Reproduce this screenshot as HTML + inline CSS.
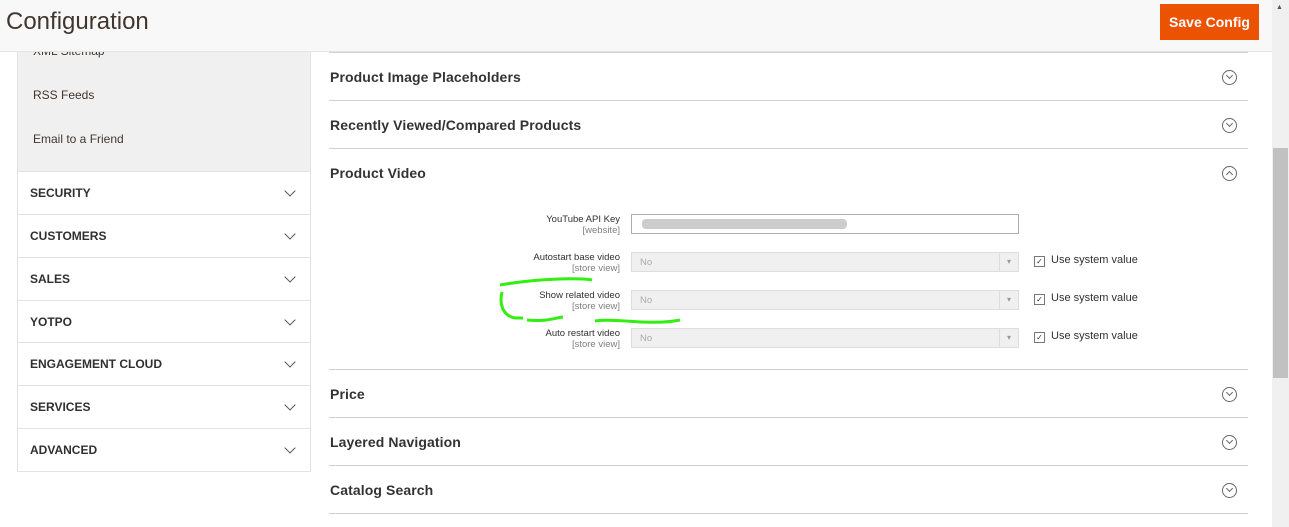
<!DOCTYPE html>
<html><head><style>
*{box-sizing:border-box;margin:0;padding:0}
body{width:1289px;height:527px;overflow:hidden;background:#fff;font-family:"Liberation Sans",sans-serif;position:relative;color:#303030}
.hdr{position:absolute;left:0;top:0;width:1272px;height:52px;background:#f8f8f8;border-bottom:1px solid #e3e3e3;z-index:2}
.hdr h1{position:absolute;left:6px;top:8px;font-size:24px;font-weight:normal;color:#41362f}
.btn{position:absolute;left:1160px;top:4px;width:99px;height:36px;background:#eb5202;color:#fff;font-weight:bold;font-size:14px;line-height:36px;text-align:center}
.sb{position:absolute;left:1272px;top:0;width:17px;height:527px;background:#f0f0f0}
.thumb{position:absolute;left:1273px;top:148px;width:15px;height:230px;background:#c1c1c1}
.side{position:absolute;left:17px;top:0;width:294px;height:472px;border:1px solid #e3e3e3;border-top:none}
.gray{position:absolute;left:0;top:0;width:292px;height:171px;background:#f0f0f0}
.gray div{position:absolute;left:15px;font-size:12px;color:#41362f}
.it{position:absolute;left:0;width:292px;height:43px;border-top:1px solid #e3e3e3;font-size:12px;font-weight:bold;padding-left:12px;line-height:42px;color:#303030}
.it:after{content:"";position:absolute;right:16px;top:15px;width:7px;height:7px;border-right:1.5px solid #555;border-bottom:1.5px solid #555;transform:rotate(45deg)}
.sec{position:absolute;left:329px;width:919px;border-top:1px solid #d1d1d1;font-size:14px;font-weight:bold;color:#333;letter-spacing:.1px}
.sec span{position:absolute;left:1px;top:16px}
.ci{position:absolute;left:893px;top:17px;width:15px;height:15px;border:1px solid #666;border-radius:50%}
.ci:after{content:"";position:absolute;left:4px;top:2px;width:4px;height:4px;border-right:1px solid #666;border-bottom:1px solid #666;transform:rotate(45deg)}
.ci.up:after{top:5px;transform:rotate(225deg)}
.lbl{position:absolute;right:669px;text-align:right;font-size:9.5px;color:#303030;line-height:11px}
.lbl i{font-style:normal;color:#808080;display:block}
.inp{position:absolute;left:631px;width:388px;height:20px;border:1px solid #adadad;background:#fff}
.sel{position:absolute;left:631px;width:388px;height:20px;border:1px solid #ddd;background:#f0f0f0;font-size:9.5px;color:#aaa;padding:4px 8px}
.sel:after{content:"▾";position:absolute;right:0;top:0;width:18px;height:18px;border-left:1px solid #ddd;text-align:center;line-height:18px;color:#999;font-size:8px}
.cb{position:absolute;left:1034px;font-size:11px;color:#303030}
.cb b{display:inline-block;width:11px;height:11px;border:1px solid #777;vertical-align:-1px;margin-right:6px;font-size:8px;line-height:9px;text-align:center;font-weight:normal}
</style></head><body>
<div class="hdr"><h1>Configuration</h1><div class="btn">Save Config</div></div>
<div class="sb"></div><div class="thumb"></div>
<div style="position:absolute;left:1276px;top:4px;font-size:7px;color:#555">▲</div>
<div class="side">
<div class="gray"><div style="top:44px">XML Sitemap</div><div style="top:88px">RSS Feeds</div><div style="top:132px">Email to a Friend</div></div>
<div class="it" style="top:171px">SECURITY</div>
<div class="it" style="top:214px">CUSTOMERS</div>
<div class="it" style="top:257px">SALES</div>
<div class="it" style="top:300px">YOTPO</div>
<div class="it" style="top:342px">ENGAGEMENT CLOUD</div>
<div class="it" style="top:385px">SERVICES</div>
<div class="it" style="top:428px">ADVANCED</div>
</div>
<div class="sec" style="top:52px;height:48px"><span style="top:16px">Product Image Placeholders</span><div class="ci" style="top:17px"></div></div>
<div class="sec" style="top:100px;height:48px"><span>Recently Viewed/Compared Products</span><div class="ci"></div></div>
<div class="sec" style="top:148px;height:221px"><span>Product Video</span><div class="ci up"></div></div>
<div class="lbl" style="top:214px">YouTube API Key<i>[website]</i></div>
<div class="inp" style="top:214px"><div style="position:absolute;left:10px;top:4px;width:205px;height:10px;background:#ccc;border-radius:4px"></div></div>
<div class="lbl" style="top:252px">Autostart base video<i>[store view]</i></div>
<div class="sel" style="top:252px">No</div><div class="cb" style="top:254px"><b>✓</b>Use system value</div>
<div class="lbl" style="top:290px">Show related video<i>[store view]</i></div>
<div class="sel" style="top:290px">No</div><div class="cb" style="top:292px"><b>✓</b>Use system value</div>
<div class="lbl" style="top:328px">Auto restart video<i>[store view]</i></div>
<div class="sel" style="top:328px">No</div><div class="cb" style="top:330px"><b>✓</b>Use system value</div>
<svg style="position:absolute;left:0;top:0" width="1289" height="527"><path d="M500 285 C540 278,580 278,592 280 M502 292 C500 300,500 315,515 318 L523 318 M527 320 C545 322,555 318,563 317 M595 321 C620 318,650 326,680 320" stroke="#33ee11" stroke-width="3" fill="none"/></svg>
<div class="sec" style="top:369px;height:48px"><span>Price</span><div class="ci"></div></div>
<div class="sec" style="top:417px;height:48px"><span>Layered Navigation</span><div class="ci"></div></div>
<div class="sec" style="top:465px;height:49px;border-bottom:1px solid #d1d1d1"><span>Catalog Search</span><div class="ci"></div></div>
</body></html>
